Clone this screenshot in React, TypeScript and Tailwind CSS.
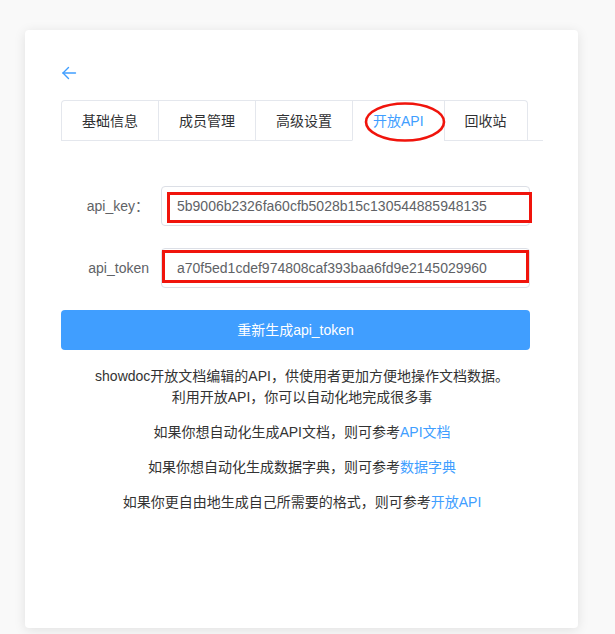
const tabs = ['基础信息', '成员管理', '高级设置', '开放API', '回收站'];

function BackArrow() {
  return (
    <svg width="16" height="14" viewBox="0 0 16 14" fill="none" stroke="#409eff" strokeWidth="1.4" strokeLinecap="round">
      <path d="M2 7h12.5" />
      <path d="M7.5 1.5L2 7l5.5 5.5" />
    </svg>
  );
}

function Field({ label, value, mark }: { label: string; value: string; mark: string }) {
  return (
    <div className="flex items-center">
      <label className="w-[100px] pr-3 text-right text-[14px] text-[#606266]">{label}</label>
      <div className="relative w-[369px]">
        <div className="h-[40px] rounded border border-[#dcdfe6] bg-white pl-[15px] text-[14px] leading-[38px] text-[#606266]">
          {value}
        </div>
        <div className={`pointer-events-none absolute border-[3px] border-[#f0140c] ${mark}`} />
      </div>
    </div>
  );
}

export default function App() {
  return (
    <div
      className="min-h-[634px] bg-[#f9f9f9] pt-[30px] pl-[25px]"
      style={{ fontFamily: '"Liberation Sans", "Noto Sans CJK SC", sans-serif' }}
    >
      <div className="h-[598px] w-[553px] rounded bg-white pl-[36px] pr-[35px] pt-[36px] shadow-[0_2px_12px_0_rgba(0,0,0,0.1)]">
        <div className="h-[14px]">
          <BackArrow />
        </div>

        {/* Tabs */}
        <div className="mt-[20px] border-b border-[#e4e7ed]">
          <div className="relative -mb-px inline-flex rounded-t border border-b-0 border-[#e4e7ed]">
            {tabs.map((t, i) => {
              const active = t === '开放API';
              return (
                <div
                  key={t}
                  className={`h-[40px] px-5 text-[14px] leading-[40px] ${i > 0 ? 'border-l border-[#e4e7ed]' : ''} ${
                    active ? 'border-b border-b-white text-[#409eff]' : 'border-b border-b-[#e4e7ed] text-[#303133]'
                  }`}
                >
                  {t}
                </div>
              );
            })}
            <svg className="pointer-events-none absolute left-[302px] top-[1px]" width="82" height="40" viewBox="0 0 82 40">
              <ellipse cx="41" cy="20" rx="39" ry="18.5" fill="none" stroke="#f0140c" strokeWidth="2.6" />
            </svg>
          </div>
        </div>

        {/* Form */}
        <div className="mt-[45px] flex flex-col gap-[22px]">
          <Field
            label="api_key："
            value="5b9006b2326fa60cfb5028b15c130544885948135"
            mark="left-[6px] -right-[2px] top-[6px] bottom-[3px]"
          />
          <Field
            label="api_token"
            value="a70f5ed1cdef974808caf393baa6fd9e2145029960"
            mark="left-[1px] right-[1px] top-[2px] bottom-[5px]"
          />
        </div>

        <button className="mt-[22px] h-[40px] w-[469px] rounded bg-[#409eff] text-[14px] text-white">
          重新生成api_token
        </button>

        <div className="mt-[16px] text-center text-[14px] leading-[21px] text-[#333]">
          <p>
            showdoc开放文档编辑的API，供使用者更加方便地操作文档数据。
            <br />
            利用开放API，你可以自动化地完成很多事
          </p>
          <p className="mt-[14px]">
            如果你想自动化生成API文档，则可参考<a className="text-[#409eff]">API文档</a>
          </p>
          <p className="mt-[14px]">
            如果你想自动化生成数据字典，则可参考<a className="text-[#409eff]">数据字典</a>
          </p>
          <p className="mt-[14px]">
            如果你更自由地生成自己所需要的格式，则可参考<a className="text-[#409eff]">开放API</a>
          </p>
        </div>
      </div>
    </div>
  );
}
